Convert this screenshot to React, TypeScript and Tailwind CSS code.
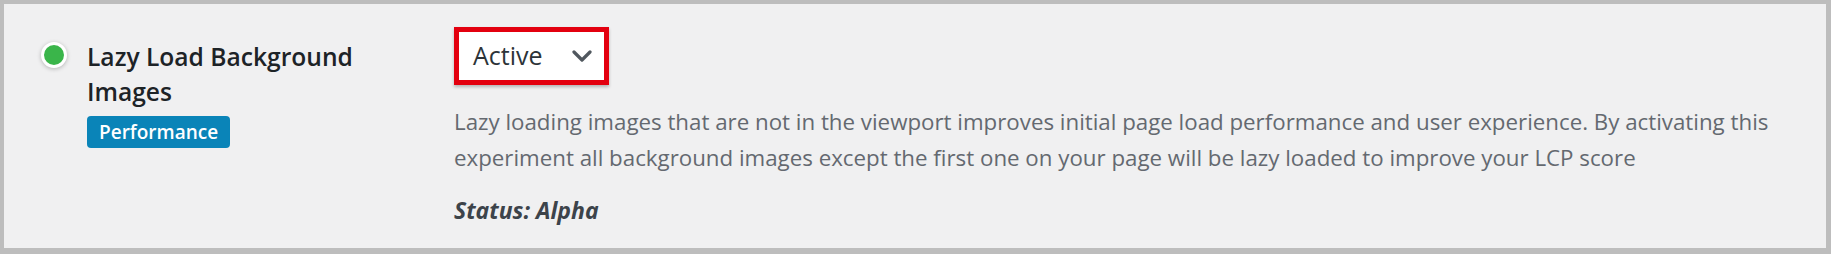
import React from 'react';

const App: React.FC = () => {
  return (
    <div className="h-[254px] w-full bg-[#f0f0f1] border-[#bdbdbd] border-t-4 border-l-4 border-r-[5px] border-b-[6px] flex font-['Open_Sans',sans-serif]">
      {/* Left: experiment name */}
      <div className="w-[450px] shrink-0 flex items-start pl-[37px] pt-[35px]">
        <span className="mt-[3px] w-[26px] h-[26px] shrink-0 rounded-full bg-[#3ab54a] border-[3px] border-white shadow-[0_1px_4px_rgba(0,0,0,0.25)]"></span>
        <div className="ml-[20px]">
          <h3 className="text-[24.6px] leading-[35px] font-semibold text-[#1d2327]">
            Lazy Load Background
            <br />
            Images
          </h3>
          <span className="inline-block mt-[7px] h-[32px] px-[12px] rounded-[4px] bg-[#0a84b8] text-white text-[19px] leading-[32px] font-semibold">
            Performance
          </span>
        </div>
      </div>

      {/* Right: select + description */}
      <div className="flex-1 pt-[23px] pr-8">
        <div className="w-[155px] h-[58px] flex items-center justify-between pl-[14px] pr-[12px] bg-white border-[5px] border-[#e3000f] shadow-[0_2px_3px_rgba(0,0,0,0.25)]">
          <span className="text-[25px] text-[#2c3338]">Active</span>
          <svg width="20" height="12" viewBox="0 0 20 12" fill="none" stroke="#50575e" strokeWidth="3.2" strokeLinecap="round" strokeLinejoin="round">
            <path d="M2 2l8 8 8-8" />
          </svg>
        </div>
        <p className="mt-[19px] max-w-[1345px] text-[22.3px] leading-[36px] text-[#646970]">
          Lazy loading images that are not in the viewport improves initial page load performance and user experience. By activating this experiment all background images except the first one on your page will be lazy loaded to improve your LCP score
        </p>
        <p className="mt-[16px] text-[23px] leading-[36px] font-bold italic text-[#3c434a]">Status: Alpha</p>
      </div>
    </div>
  );
};

export default App;
